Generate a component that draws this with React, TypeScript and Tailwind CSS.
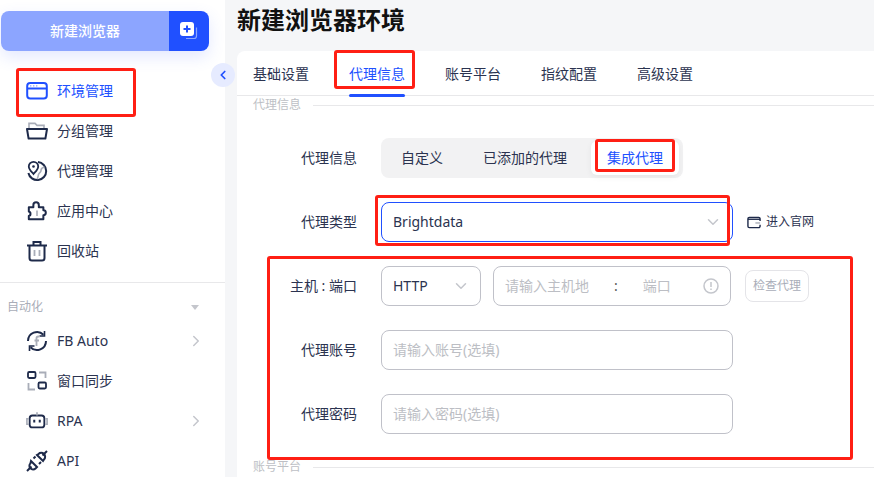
import { ChevronDown, ChevronLeft, ChevronRight } from "lucide-react";
import type { ReactNode } from "react";

const navy = "#1e2a4a";
const mute = "#a9adb8";

const WindowIcon = () => (
  <svg width="22" height="20" viewBox="0 0 22 20" fill="none">
    <rect x="1.2" y="2" width="19.6" height="15.6" rx="3" stroke="#2050ff" strokeWidth="2" />
    <path d="M2 7.500h18" stroke="#2050ff" strokeWidth="2" />
    <path d="M4 4.800h1.400M7 4.800h1.400M10 4.800h1.400" stroke="#8ca5ff" strokeWidth="1.200" />
  </svg>
);
const FolderIcon = () => (
  <svg width="22" height="20" viewBox="0 0 22 20" fill="none">
    <path d="M3 8V2.400h6l2 2h7V8" stroke={mute} strokeWidth="1.600" />
    <path d="M1 8h20l-1.600 9.600H2.600z" stroke={navy} strokeWidth="2" strokeLinejoin="round" />
  </svg>
);
const GlobeIcon = () => (
  <svg width="22" height="22" viewBox="0 0 22 22" fill="none">
    <path d="M12 2.100A9 9 0 1 1 2.400 13" stroke={navy} strokeWidth="2" />
    <path d="M7.500 1.800a4.700 4.700 0 0 1 4.700 4.700c0 3-2.800 5.300-4.700 7.500C5.600 11.800 2.800 9.500 2.800 6.500a4.700 4.700 0 0 1 4.700-4.700z" stroke={navy} strokeWidth="1.800" />
    <circle cx="7.500" cy="6.500" r="1.300" fill={navy} />
    <path d="M18.500 7c-2 .5-3.500 1.500-3.500 3.500s-2 2-2.500 4-.5 3-1.500 4.500" stroke={mute} strokeWidth="1.600" />
  </svg>
);
const PuzzleIcon = () => (
  <svg width="20" height="20" viewBox="0 0 22 22" fill="none">
    <path
      d="M2 7h5V4.500a3 3 0 0 1 6 0V7h5v3.200a2.700 2.700 0 0 1 0 5.400V20H2v-3.500a2.400 2.400 0 0 0 1.800-2.500A2.400 2.400 0 0 0 2 11.500z"
      stroke={navy}
      strokeWidth="2.200"
      strokeLinejoin="round"
    />
    <path d="M11 10.500v6" stroke={mute} strokeWidth="1.800" />
  </svg>
);
const TrashIcon = () => (
  <svg width="22" height="22" viewBox="0 0 22 22" fill="none">
    <path d="M1 5.500h20M7.500 5V2h7v3" stroke={navy} strokeWidth="2" />
    <path d="M3.500 6v12a2.500 2.500 0 0 0 2.500 2.500h10a2.500 2.500 0 0 0 2.500-2.500V6" stroke={navy} strokeWidth="2" />
    <path d="M8.500 10v6M13.500 10v6" stroke={mute} strokeWidth="1.800" />
  </svg>
);
const FbIcon = () => (
  <svg width="22" height="22" viewBox="0 0 22 22" fill="none">
    <path d="M2 11a9 9 0 0 1 15.500-6.200M20 11a9 9 0 0 1-15.500 6.200" stroke={navy} strokeWidth="2" />
    <path d="M18.500 1v5h-5M3.500 21v-5h5" stroke={navy} strokeWidth="1.600" />
    <path d="M13.500 6.500h-1.300a1.700 1.700 0 0 0-1.700 1.700V16M8.500 10.500h4.500" stroke={mute} strokeWidth="1.800" />
  </svg>
);
const SyncIcon = () => (
  <svg width="22" height="22" viewBox="0 0 22 22" fill="none">
    <rect x="2" y="2" width="7.500" height="6" rx="1.200" stroke={navy} strokeWidth="1.800" />
    <rect x="12.500" y="12.500" width="7.500" height="6" rx="1.200" stroke={navy} strokeWidth="1.800" />
    <path d="M13 2.500h6.500V8M9 19.500H2.500V13" stroke={mute} strokeWidth="1.800" />
  </svg>
);
const RobotIcon = () => (
  <svg width="24" height="22" viewBox="0 0 24 22" fill="none">
    <rect x="4" y="5" width="16" height="13" rx="3" stroke={navy} strokeWidth="2" />
    <path d="M12 1.500V5" stroke={mute} strokeWidth="1.800" />
    <path d="M3 8.500H1v6h2M21 8.500h2v6h-2" stroke={mute} strokeWidth="1.800" />
    <path d="M9 9.500v3M15 9.500v3" stroke={navy} strokeWidth="2.200" />
  </svg>
);
const PlugIcon = () => (
  <svg width="22" height="22" viewBox="0 0 22 22" fill="none">
    <path d="M1 21l4.500-4.500M16.500 5.500L21 1" stroke={navy} strokeWidth="2" />
    <path d="M5 11l6 6-1.500 1.500a3.500 3.500 0 0 1-5-.1 3.500 3.500 0 0 1-.1-5z" stroke={navy} strokeWidth="2" />
    <path d="M11 5l6 6 1-1.500a3.500 3.500 0 0 0-5.500-5.500z" stroke={navy} strokeWidth="2" />
    <path d="M7.500 8.500l2-2M13 14l2-2" stroke={navy} strokeWidth="2" />
  </svg>
);

const NavRow = ({
  icon,
  label,
  active,
  arrow,
}: {
  icon: ReactNode;
  label: string;
  active?: boolean;
  arrow?: boolean;
}) => (
  <div className="flex h-10 items-center pl-[26px] pr-[20px]">
    <span className="flex w-[22px] justify-center">{icon}</span>
    <span className={`ml-[9px] flex-1 text-sm ${active ? "text-[#2050ff]" : "text-[#2b3350]"}`}>{label}</span>
    {arrow && <ChevronRight size={18} strokeWidth={2} className="text-[#c4c6cc]" />}
  </div>
);

const Sidebar = () => (
  <aside className="flex h-[477px] w-[225px] shrink-0 flex-col overflow-hidden bg-white">
    <div className="mt-[11px] ml-px flex h-10 w-[208px] shrink-0 overflow-hidden rounded-lg shadow-[0_6px_16px_rgba(80,110,255,0.16)]">
      <div className="flex flex-1 items-center justify-center bg-[#8ca5ff] text-sm font-medium text-white">新建浏览器</div>
      <div className="flex w-10 items-center justify-center bg-[#2050ff]">
        <svg width="20" height="20" viewBox="0 0 20 20" fill="none">
          <path d="M17.500 6.500V15a2.500 2.500 0 0 1-2.500 2.500H7" stroke="#8ca5ff" strokeWidth="1.200" />
          <rect x="1" y="1" width="14" height="14" rx="3" fill="#fff" />
          <path d="M8 4.500v7M4.500 8h7" stroke="#2050ff" strokeWidth="2" />
        </svg>
      </div>
    </div>
    <div className="mt-5 shrink-0">
      <NavRow icon={<WindowIcon />} label="环境管理" active />
      <NavRow icon={<FolderIcon />} label="分组管理" />
      <NavRow icon={<GlobeIcon />} label="代理管理" />
      <NavRow icon={<PuzzleIcon />} label="应用中心" />
      <NavRow icon={<TrashIcon />} label="回收站" />
    </div>
    <div className="mt-[11px] h-px shrink-0 bg-[#e8e8ea]" />
    <div className="flex h-[48px] shrink-0 items-center justify-between pl-[7px] pr-[26px] text-xs text-[#a9adb8]">
      <span>自动化</span>
      <span className="h-0 w-0 border-x-[4px] border-t-[5px] border-x-transparent border-t-[#c4c6cc]" />
    </div>
    <div className="-mt-[10px] shrink-0">
      <NavRow icon={<FbIcon />} label="FB Auto" arrow />
      <NavRow icon={<SyncIcon />} label="窗口同步" />
      <NavRow icon={<RobotIcon />} label="RPA" arrow />
      <NavRow icon={<PlugIcon />} label="API" />
    </div>
  </aside>
);

const SectionTitle = ({ children }: { children: string }) => (
  <div className="flex h-5 items-center pl-4 text-xs text-[#bdbfc5]">
    <span>{children}</span>
    <span className="ml-3 h-px flex-1 bg-[#e8e8ea]" />
  </div>
);

const Row = ({ label, children }: { label: string; children: ReactNode }) => (
  <div className="flex h-10 items-center">
    <span className="w-[120px] text-right text-sm whitespace-nowrap text-[#2b3350]">{label}</span>
    <div className="ml-6 flex items-center">{children}</div>
  </div>
);

const Field = ({ placeholder }: { placeholder: string }) => (
  <div className="flex h-10 w-[352px] items-center rounded-lg border border-[#c0c1c9] px-[11px] text-sm text-[#bcbec4]">
    {placeholder}
  </div>
);

const Redbox = ({ className }: { className: string }) => (
  <div className={`pointer-events-none absolute rounded-[3px] border-[3px] border-[#ff1f14] ${className}`} />
);

export default function App() {
  const tabs = ["基础设置", "代理信息", "账号平台", "指纹配置", "高级设置"];
  return (
    <div className="relative flex h-[477px] w-[874px] overflow-hidden bg-[#f5f6f8] font-['Noto_Sans','Noto_Sans_CJK_SC',sans-serif]">
      <Sidebar />
      <button className="absolute left-[211px] top-[63px] z-10 flex h-6 w-6 items-center justify-center rounded-full bg-[#e6ebff] text-[#2050ff]">
        <ChevronLeft size={14} strokeWidth={3} />
      </button>
      <main className="flex h-[477px] min-w-0 flex-1 flex-col overflow-hidden pl-3">
        <h1 className="flex h-[51px] shrink-0 items-center pb-[11px] text-2xl font-bold text-[#111]">新建浏览器环境</h1>
        <div className="flex-1 rounded-tl-lg bg-white">
          <div className="flex h-[45px] border-b border-[#e8e8ea] pl-4">
            {tabs.map((tab, i) => (
              <div
                key={tab}
                className={`relative mr-10 flex items-center text-[14px] ${i === 1 ? "text-[#2050ff]" : "text-[#2b3350]"}`}
              >
                {tab}
                {i === 1 && <span className="absolute -bottom-[2px] left-0 h-[3px] w-full rounded-full bg-[#2050ff]" />}
              </div>
            ))}
          </div>
          <div className="-mt-px">
            <SectionTitle>代理信息</SectionTitle>
          </div>
          <div className="mt-[23px] flex flex-col gap-6">
            <Row label="代理信息">
              <div className="flex h-10 w-[302px] items-center rounded-lg bg-[#f2f2f3] text-sm text-[#2b3350]">
                <span className="ml-5">自定义</span>
                <span className="ml-10">已添加的代理</span>
                <span className="ml-6 flex h-[34px] w-[88px] items-center justify-center rounded-md bg-white text-[#2050ff] shadow-[0_2px_6px_rgba(0,0,0,0.06)]">集成代理</span>
              </div>
            </Row>
            <Row label="代理类型">
              <div className="flex h-10 w-[352px] items-center justify-between rounded-lg border border-[#2050ff] pl-[11px] pr-[10px] text-sm text-[#2b3350]">
                Brightdata
                <ChevronDown size={18} strokeWidth={2} className="text-[#c4c6cc]" />
              </div>
              <svg className="ml-[14px]" width="14" height="13" viewBox="0 0 15 13" fill="none">
                <path d="M14 5V2.500A1.500 1.500 0 0 0 12.500 1h-10A1.500 1.500 0 0 0 1 2.500v8A1.500 1.500 0 0 0 2.500 12h10a1.500 1.500 0 0 0 1.500-1.500V9" stroke={navy} strokeWidth="1.500" />
                <path d="M1 3h13" stroke={navy} strokeWidth="1.500" />
                <path d="M9 7h5" stroke={mute} strokeWidth="1.500" />
              </svg>
              <span className="ml-[5px] text-xs text-[#2b3350]">进入官网</span>
            </Row>
            <Row label="主机 : 端口">
              <div className="flex h-10 w-[100px] items-center justify-between rounded-lg border border-[#c0c1c9] pl-[11px] pr-[10px] text-sm text-[#2b3350]">
                HTTP
                <ChevronDown size={18} strokeWidth={2} className="text-[#c4c6cc]" />
              </div>
              <div className="ml-3 flex h-10 w-[238px] items-center rounded-lg border border-[#c0c1c9] pl-[11px] pr-[11px] text-sm text-[#bcbec4]">
                <span className="w-[84px] overflow-hidden whitespace-nowrap">请输入主机地</span>
                <span className="ml-[25px] text-[#555]">:</span>
                <span className="ml-[25px] flex-1">端口</span>
                <svg width="16" height="16" viewBox="0 0 16 16" fill="none">
                  <circle cx="8" cy="8" r="7" stroke="#c4c6cc" strokeWidth="1.500" />
                  <path d="M8 4v5M8 10.500v1.500" stroke="#c4c6cc" strokeWidth="1.500" />
                </svg>
              </div>
              <div className="ml-[14px] flex h-8 w-16 items-center justify-center rounded-lg border border-[#e4e4e8] text-xs text-[#a9adb8]">检查代理</div>
            </Row>
            <Row label="代理账号">
              <Field placeholder="请输入账号(选填)" />
            </Row>
            <Row label="代理密码">
              <Field placeholder="请输入密码(选填)" />
            </Row>
          </div>
          <div className="mt-[23px]">
            <SectionTitle>账号平台</SectionTitle>
          </div>
        </div>
      </main>
      <Redbox className="left-[16px] top-[68px] h-[49px] w-[120px]" />
      <Redbox className="left-[334px] top-[50px] h-[39px] w-[81px]" />
      <Redbox className="left-[595px] top-[139px] h-[33px] w-[80px]" />
      <Redbox className="left-[375px] top-[195px] h-[51px] w-[355px]" />
      <Redbox className="left-[267px] top-[256px] h-[204px] w-[586px]" />
    </div>
  );
}
